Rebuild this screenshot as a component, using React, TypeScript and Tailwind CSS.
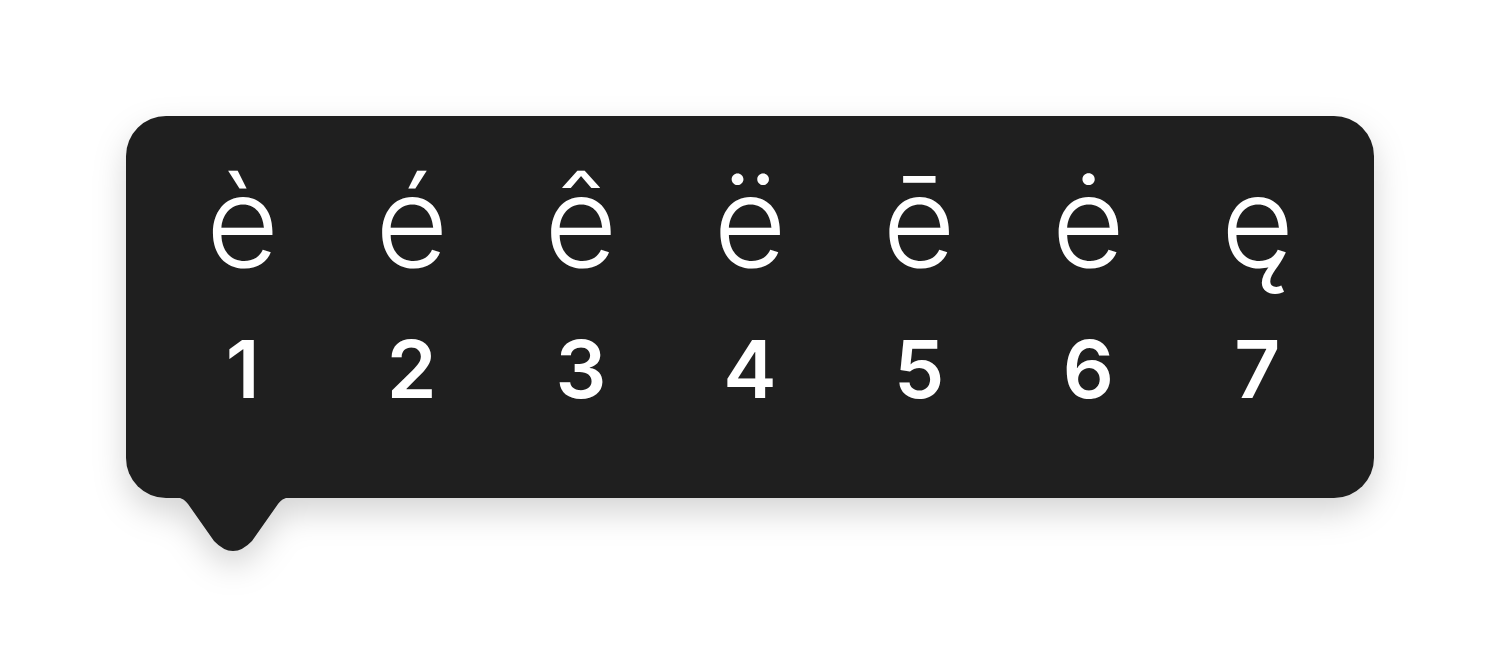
const accents = ["è", "é", "ê", "ë", "ē", "ė", "ę"];

export default function App() {
  return (
    <div className="min-h-screen w-full bg-white pl-[126px] pt-[116px]">
      <div className="relative w-[1248px] [filter:drop-shadow(0_14px_16px_rgba(0,0,0,0.17))]">
        <div className="flex h-[382px] flex-col gap-[45px] rounded-[40px] bg-[#1f1f1f] px-[32px] pt-[42px] font-['Inter',sans-serif] text-white">
          <div className="grid grid-cols-7 text-[126px] font-light leading-none">
            {accents.map((c) => (
              <span key={c} className="text-center">
                {c}
              </span>
            ))}
          </div>
          <div className="grid grid-cols-7 text-[80px] font-semibold leading-none">
            {accents.map((c, i) => (
              <span key={c} className="text-center">
                {i + 1}
              </span>
            ))}
          </div>
        </div>
        {/* tail */}
        <svg
          className="absolute left-[48px] top-[381px]"
          width="118"
          height="56"
          viewBox="0 0 118 56"
        >
          <path
            d="M0 0 C6 0 10 2 14 7 L40 44 Q59 64 78 44 L104 7 C108 2 112 0 118 0 Z"
            fill="#1f1f1f"
          />
        </svg>
      </div>
    </div>
  );
}
